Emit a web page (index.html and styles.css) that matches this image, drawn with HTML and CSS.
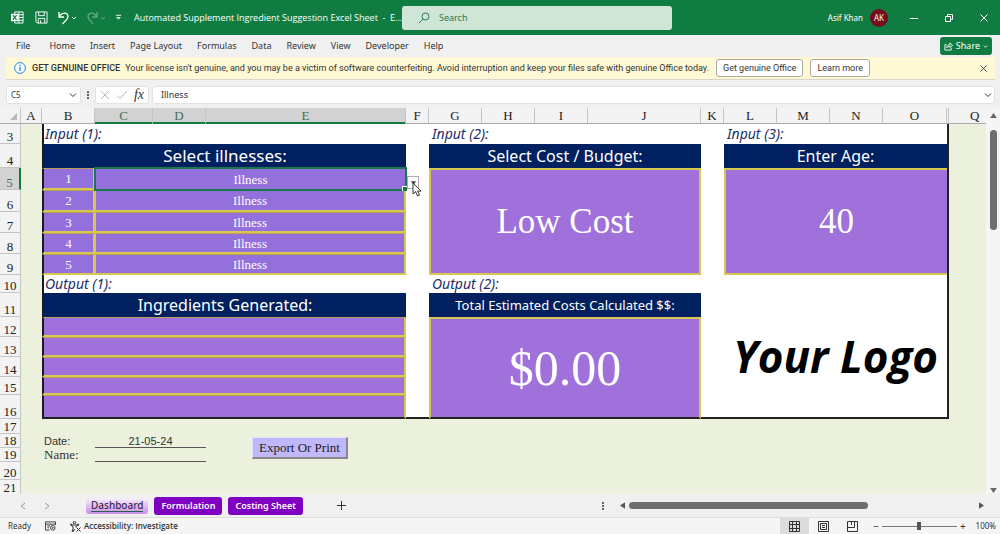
FILE: index.html
```html
<!DOCTYPE html>
<html lang="en">
<head>
<meta charset="utf-8">
<title>Automated Supplement Ingredient Suggestion Excel Sheet</title>
<link rel="stylesheet" href="styles.css">
</head>
<body>
<header class="titlebar">
  <div class="quick">
    <svg class="i-app" viewBox="0 0 14 14" width="13" height="13"><path d="M4 1h9v12H4z" fill="none" stroke="#fff"/><path d="M8.500 1v12M4 4h9M4 7h9M4 10h9" stroke="#fff" fill="none"/><path d="M0 3h8v8H0z" fill="#fff"/><path d="M2 4.500l4 5M6 4.500l-4 5" stroke="#107c41" stroke-width="1.300"/></svg>
    <button class="tool" aria-label="Save"><svg viewBox="0 0 14 14" width="13" height="13" class="ln"><path d="M1 1h12v12H2.500L1 11.500zM4 1v4h6V1M3.500 13V8h7v5M6 10v3"/></svg></button>
    <button class="tool" aria-label="Undo"><svg viewBox="0 0 20 14" width="20" height="14" class="ln"><path d="M2 1v5h5M2 6c3-5 9-5 9-.5C11 8 8 10 5.500 13" stroke-width="1.300"/><path d="M15 6l2 2 2-2"/></svg></button>
    <button class="tool dim" aria-label="Redo"><svg viewBox="0 0 20 14" width="20" height="14" class="ln"><path d="M11 1v5H6M11 6C8 1 2 1 2 5.500C2 8 5 10 7 13" stroke-width="1.300"/><path d="M15 6l2 2 2-2"/></svg></button>
    <button class="tool" aria-label="Customize toolbar"><svg viewBox="0 0 8 8" width="7" height="7" class="ln"><path d="M1 1.500h6M2 4l2 2 2-2z"/></svg></button>
  </div>
  <div class="doc">Automated Supplement Ingredient Suggestion Excel Sheet&nbsp; -&nbsp; E...</div>
  <label class="search"><svg viewBox="0 0 12 12" width="12" height="12"><circle cx="7.500" cy="4.500" r="3.500"/><path d="M5 7L1 11"/></svg><input type="text" placeholder="Search" aria-label="Search"></label>
  <div class="account"><span>Asif Khan</span><span class="avatar">AK</span></div>
  <div class="window">
    <button class="tool" aria-label="Minimize"><svg viewBox="0 0 8 8" width="8" height="8" class="ln"><path d="M0 4.500h8"/></svg></button>
    <button class="tool" aria-label="Restore"><svg viewBox="0 0 8 8" width="8" height="8" class="ln"><path d="M.5 2.500h5v5h-5zM2.500 2V.5h5v5H6"/></svg></button>
    <button class="tool" aria-label="Close"><svg viewBox="0 0 8 8" width="8" height="8" class="ln"><path d="M.5.5l7 7M7.500.5l-7 7"/></svg></button>
  </div>
</header>
<nav class="menu">
  <button class="file">File</button><button>Home</button><button>Insert</button><button>Page Layout</button><button>Formulas</button><button>Data</button><button>Review</button><button>View</button><button>Developer</button><button>Help</button>
  <button class="share"><svg viewBox="0 0 10 10" width="9" height="9" class="ln"><path d="M3 3H1v6h7V6.500M3 6.500C3.500 4 5 3 6.500 3V1L9.500 3.700 6.500 6.200V4.700C5 4.700 4 5.200 3 6.500z"/></svg>Share<svg viewBox="0 0 6 6" width="5" height="5" class="ln"><path d="M1 2l2 2 2-2"/></svg></button>
</nav>
<section class="notice">
  <svg viewBox="0 0 12 12" width="12" height="12"><circle cx="6" cy="6" r="5.400" fill="#f4fbff" stroke="#2b88d8"/><path d="M6 5v4M6 2.700v1.300" stroke="#2b88d8" stroke-width="1.300"/></svg>
  <strong>GET GENUINE OFFICE</strong>
  <span>Your license isn't genuine, and you may be a victim of software counterfeiting. Avoid interruption and keep your files safe with genuine Office today.</span>
  <button class="outline">Get genuine Office</button><button class="outline">Learn more</button>
  <button class="tool close" aria-label="Dismiss"><svg viewBox="0 0 8 8" width="7" height="7" class="ln"><path d="M.5.5l7 7M7.500.5l-7 7"/></svg></button>
</section>
<section class="formula">
  <label class="box name"><input type="text" value="C5" aria-label="Name box"><svg viewBox="0 0 8 8" width="8" height="8" class="ln"><path d="M1 2.500l3 3 3-3"/></svg></label>
  <span class="grip"></span>
  <div class="box fx">
    <button class="tool faint" aria-label="Cancel"><svg viewBox="0 0 10 10" width="10" height="10" class="ln"><path d="M1 1l8 8M9 1L1 9"/></svg></button>
    <button class="tool faint" aria-label="Enter"><svg viewBox="0 0 12 10" width="12" height="10" class="ln"><path d="M1 5.500l3 3L11 1"/></svg></button>
    <button class="tool fn" aria-label="Insert function">fx</button>
  </div>
  <label class="box entry"><input type="text" value="Illness" aria-label="Formula bar"><svg viewBox="0 0 8 8" width="8" height="8" class="ln"><path d="M1 2.500l3 3 3-3"/></svg></label>
</section>
<main class="work">
  <div class="grid">
    <table class="sheet">
      <colgroup><col class="w21"><col class="w21"><col class="w53"><col class="w58"><col class="w53"><col class="w200"><col class="w23"><col class="w53"><col class="w53"><col class="w53"><col class="w113"><col class="w23"><col class="w53"><col class="w53"><col class="w53"><col class="w64"><col class="w2"><col></colgroup>
      <thead><tr><th class="corner"><svg viewBox="0 0 8 8" width="7" height="7"><path d="M8 0v8H0z" fill="#b8b8b8"/></svg></th><th>A</th><th>B</th><th class="on">C</th><th class="on">D</th><th class="on">E</th><th>F</th><th>G</th><th>H</th><th>I</th><th>J</th><th>K</th><th>L</th><th>M</th><th>N</th><th>O</th><th></th><th class="last">Q</th></tr></thead>
      <tbody>
        <tr class="h20"><th>3</th><td rowspan="14"></td><td colspan="4" class="label edge">Input (1):</td><td class="white"></td><td colspan="4" class="label">Input (2):</td><td class="white foot" rowspan="14"></td><td colspan="4" class="label">Input (3):</td><td class="frame" rowspan="14"></td><td rowspan="14"></td></tr>
        <tr class="h24"><th>4</th><td colspan="4" class="head large edge">Select illnesses:</td><td class="white"></td><td colspan="4" class="head">Select Cost / Budget:</td><td colspan="4" class="head">Enter Age:</td></tr>
        <tr class="h22"><th class="on">5</th><td class="item edge">1</td><td colspan="3" class="item selected">Illness<span class="handle"></span></td><td class="white anchor"><button class="drop" aria-label="Choose illness"><svg viewBox="0 0 6 4" width="5" height="4"><path d="M0 0h6L3 4z" fill="#333"/></svg></button><svg class="pointer" viewBox="0 0 10 15" width="10" height="15"><path d="M1 1v11l2.600-2.300L5.500 14l2-.9-1.900-4H9z" fill="#fff" stroke="#333"/></svg></td><td colspan="4" rowspan="5" class="value">Low Cost</td><td colspan="4" rowspan="5" class="value open">40</td></tr>
        <tr class="h22"><th>6</th><td class="item edge">2</td><td colspan="3" class="item">Illness</td><td class="white"></td></tr>
        <tr class="h21"><th>7</th><td class="item edge">3</td><td colspan="3" class="item">Illness</td><td class="white"></td></tr>
        <tr class="h21"><th>8</th><td class="item edge">4</td><td colspan="3" class="item">Illness</td><td class="white"></td></tr>
        <tr class="h21"><th>9</th><td class="item edge">5</td><td colspan="3" class="item">Illness</td><td class="white"></td></tr>
        <tr class="h18"><th>10</th><td colspan="4" class="label edge">Output (1):</td><td class="white foot" rowspan="7"></td><td colspan="4" class="label">Output (2):</td><td colspan="4" rowspan="7" class="logo foot">Your Logo</td></tr>
        <tr class="h24"><th>11</th><td colspan="4" class="head edge">Ingredients Generated:</td><td colspan="4" class="head small">Total Estimated Costs Calculated $$:</td></tr>
        <tr class="h20"><th>12</th><td colspan="4" class="item result edge"></td><td colspan="4" rowspan="5" class="value total foot">$0.00</td></tr>
        <tr class="h20"><th>13</th><td colspan="4" class="item result edge"></td></tr>
        <tr class="h20"><th>14</th><td colspan="4" class="item result edge"></td></tr>
        <tr class="h18"><th>15</th><td colspan="4" class="item result edge"></td></tr>
        <tr class="h24"><th>16</th><td colspan="4" class="item result edge foot"></td></tr>
        <tr class="h15"><th>17</th><td colspan="17"></td></tr>
        <tr class="h14"><th>18</th><td></td><td class="sign">Date:</td><td colspan="2" class="line">21-05-24</td><td rowspan="2" class="action"><button class="export">Export Or Print</button></td><td colspan="12" rowspan="2"></td></tr>
        <tr class="h14"><th>19</th><td></td><td class="sign serif">Name:</td><td colspan="2" class="line"></td></tr>
        <tr class="h18"><th>20</th><td colspan="17"></td></tr>
        <tr class="h15"><th>21</th><td colspan="17"></td></tr>
      </tbody>
    </table>
  </div>
  <div class="vscroll"><svg viewBox="0 0 8 6" width="7" height="5"><path d="M4 0l4 6H0z"/></svg><span class="thumb"></span><svg class="end" viewBox="0 0 8 6" width="7" height="5"><path d="M0 0h8L4 6z"/></svg></div>
</main>
<section class="tabs">
  <div class="arrows"><svg viewBox="0 0 6 8" width="6" height="8" class="ln"><path d="M5 1L1 4l4 3"/></svg><svg viewBox="0 0 6 8" width="6" height="8" class="ln"><path d="M1 1l4 3-4 3"/></svg></div>
  <button class="tab current"><span>Dashboard</span></button><button class="tab">Formulation</button><button class="tab">Costing Sheet</button>
  <button class="tool add" aria-label="New sheet"><svg viewBox="0 0 9 9" width="9" height="9" class="ln"><path d="M4.500 0v9M0 4.500h9"/></svg></button>
  <span class="grip"></span>
  <div class="hscroll"><svg viewBox="0 0 6 8" width="5" height="7"><path d="M6 0v8L0 4z"/></svg><div class="track"><span class="thumb"></span></div><svg viewBox="0 0 6 8" width="5" height="7"><path d="M0 0v8l6-4z"/></svg></div>
</section>
<footer class="status">
  <span>Ready</span>
  <svg viewBox="0 0 12 10" width="11" height="10" class="ln"><path d="M5 9.500H.5v-9h11V4M.5 3h11M2.500 5h3M2.500 7h2"/><circle cx="8.500" cy="7" r="2.500"/><circle cx="8.500" cy="7" r=".6"/></svg>
  <span class="access"><svg viewBox="0 0 11 11" width="11" height="11" class="ln"><circle cx="4.500" cy="1.700" r="1.200"/><path d="M.5 3c3 1.500 5 1.500 8 0l.3 1.200L6 5.300v1M.5 3l.3 1.200L3 5.300V8L2 10.500l1.200.2L4.500 8M6.500 6.500l4 4M10.500 6.500l-4 4"/></svg><strong>Accessibility: Investigate</strong></span>
  <div class="views">
    <button class="tool active" aria-label="Normal view"><svg viewBox="0 0 11 11" width="11" height="11" class="ln"><path d="M.5.5h10v10H.5zM3.500.5v10M7.500.5v10M.5 3.500h10M.5 7.500h10"/></svg></button>
    <button class="tool" aria-label="Page layout view"><svg viewBox="0 0 11 11" width="11" height="11" class="ln"><path d="M.5.5h10v10H.5zM2.500 2.500h6v6h-6zM4 4.500h3M4 6.500h3"/></svg></button>
    <button class="tool" aria-label="Page break view"><svg viewBox="0 0 11 11" width="11" height="11" class="ln"><path d="M.5.5h10v10H.5zM.5 6.500h7V.5M4.500.5V4"/></svg></button>
  </div>
  <div class="zoom"><button class="tool" aria-label="Zoom out">−</button><input type="range" min="0" max="200" value="100" aria-label="Zoom"><button class="tool" aria-label="Zoom in">+</button></div>
  <span class="percent">100%</span>
</footer>
</body>
</html>
```
FILE: styles.css
```css
* { box-sizing: border-box; }
body { margin: 0; height: 100vh; display: flex; flex-direction: column; overflow: hidden; background: #f0f0f0; color: #333; font: 10px/14px "Noto Sans", "Open Sans", sans-serif; }
button, input { font: inherit; color: inherit; margin: 0; padding: 0; border: 0; background: none; min-width: 0; }
.tool { display: flex; align-items: center; justify-content: center; }
svg { display: block; flex: none; }
.ln { fill: none; stroke: currentColor; stroke-width: 1; }

.titlebar { display: flex; align-items: center; height: 35px; flex: none; background: #107c41; color: #fff; font-size: 9px; padding-right: 12px; }
.quick { display: flex; align-items: center; width: 134px; padding-left: 11px; gap: 9px; flex: none; }
.quick .i-app { margin-right: 2px; }
.dim { opacity: .35; }
.doc { width: 268px; flex: none; white-space: nowrap; font-family: "Open Sans", sans-serif; }
.search { display: flex; align-items: center; gap: 9px; flex: 0 1 270px; height: 24px; padding-left: 16px; border-radius: 3px; background: #cfe5d6; color: #2c7a50; font-size: 9px; }
.search svg { fill: none; stroke: #2c7a50; }
.search input { flex: 1; }
.search input::placeholder { color: #2c7a50; opacity: 1; }
.account { display: flex; align-items: center; gap: 7px; margin-left: auto; font-size: 8px; }
.avatar { width: 18px; height: 18px; border-radius: 50%; background: #750b1c; line-height: 18px; text-align: center; font-size: 8px; }
.window { display: flex; gap: 27px; margin-left: 22px; }

.menu { display: flex; align-items: center; height: 22px; flex: none; gap: 15px; padding: 0 8px 0 16px; font-size: 9px; }
.menu .file { margin-right: 4px; }
.menu .share { display: flex; align-items: center; gap: 3px; margin-left: auto; height: 18px; padding: 0 4px; border-radius: 3px; background: #107c41; color: #fff; }
.notice { display: flex; align-items: center; height: 23px; flex: none; margin: 0 5px 0 6px; padding: 0 8px; background: #fff8d4; font: 9px/14px Roboto, sans-serif; border-bottom: 1px solid #d8d6cc; white-space: nowrap; }
.notice strong { font-weight: 500; margin: 0 5px 0 6px; }
.outline { height: 18px; padding: 0 6px; margin-left: 7px; border: 1px solid #aaa; border-radius: 3px; background: #fff; }
.notice .close { margin-left: auto; }

.formula { display: flex; align-items: center; height: 28px; flex: none; padding: 1px 5px 0 6px; }
.box { display: flex; align-items: center; height: 18px; background: #fff; border: 1px solid #e2e2e2; border-radius: 3px; }
.name { width: 75px; padding: 0 3px 0 4px; font-size: 8px; }
.name input, .entry input { flex: 1; }
.entry { font-size: 9px; }
.grip { width: 2px; height: 8px; margin: 0 6px; flex: none; background: repeating-linear-gradient(#666 0 2px, transparent 2px 3px); }
.fx { width: 54px; justify-content: space-between; padding: 0 4px; }
.faint { color: #bbb; }
.fn { font: italic 14px/14px "Liberation Serif", serif; }
.entry { flex: 1; margin-left: 3px; padding: 0 2px 0 8px; }

.work { display: flex; flex: 1; min-height: 0; }
.grid { flex: 1; min-width: 0; overflow: hidden; background: #ebf1dd; }
.sheet { width: 100%; table-layout: fixed; border-collapse: separate; border-spacing: 0; line-height: 12px; }
.sheet td, .sheet th { padding: 0; overflow: hidden; white-space: nowrap; }
.sheet th { background: #f3f3f3; font: 13px/12px "Liberation Serif", serif; border-right: 1px solid #c4c4c4; border-bottom: 1px solid #c4c4c4; vertical-align: bottom; color: #222; }
.sheet thead th { height: 16px; line-height: 14px; border-bottom-color: #aaa; }
.sheet th.on { background: #d2d2d2; color: #447055; border-bottom-color: #107c41; box-shadow: inset 0 -1px #107c41; }
.sheet tbody th.on { border-bottom-color: #c4c4c4; border-right: 2px solid #107c41; box-shadow: none; }
.sheet .corner svg { margin: 0 3px 3px auto; }
.sheet .last { text-align: left; padding-left: 21px; border-right: 0; }
.w2 { width: 2px; } .w21 { width: 21px; } .w23 { width: 23px; } .w53 { width: 53px; } .w58 { width: 58px; } .w64 { width: 64px; } .w113 { width: 113px; } .w200 { width: 200px; }
.h14 { height: 14px; } .h15 { height: 15px; } .h18 { height: 18px; } .h20 { height: 20px; } .h21 { height: 21px; } .h22 { height: 22px; } .h24 { height: 24px; }
.white, .sheet .label, .logo { background: #fff; }
.sheet .label { padding-left: 3px; color: #1d2d66; font: italic 14px/16px "Noto Sans", sans-serif; }
.sheet .label.edge { padding-left: 1px; }
.head { background: #002060; color: #fff; text-align: center; font-size: 16px; line-height: 20px; }
.head.large { font-size: 17px; }
.head.small { font-size: 13px; }
.item { background: #9370db; color: #fff; text-align: center; border: solid #d9c850; border-width: 1px 2px 2px 1px; border-top-color: #b9a052; font: 13px/13px "Liberation Serif", serif; }
.result, .value { background: #a070db; }
.value { border: 2px solid #d9c850; color: #fff; text-align: center; font: 35px/40px "Liberation Serif", serif; }
.value.open { border-right: 0; }
.value.total { font-size: 50px; line-height: 54px; }
.edge { border-left: 2px solid #1a1a22; }
.foot { border-bottom: 2px solid #222; }
.frame { background: #222; }
.sheet .selected { position: relative; z-index: 1; overflow: visible; border: 1px solid #d9c850; outline: 2px solid #18794a; outline-offset: -1px; }
.handle { position: absolute; right: -2px; bottom: -2px; width: 5px; height: 5px; background: #107c41; border: solid #fff; border-width: 1px 0 0 1px; }
.sheet .anchor { position: relative; overflow: visible; }
.drop { position: absolute; left: 1px; top: 8px; width: 12px; height: 13px; display: flex; align-items: center; justify-content: center; background: #fff; border: 1px solid #b8a9b8; }
.pointer { position: absolute; left: 6px; top: 14px; z-index: 2; }
.sheet .logo { padding-top: 20px; text-align: center; vertical-align: middle; color: #000; font: italic bold 44px/54px "Open Sans", sans-serif; }
.sheet .sign { padding-left: 2px; font: 11px/12px "Liberation Sans", sans-serif; }
.sheet .sign.serif { font: 13px/12px "Liberation Serif", serif; }
.line { border-bottom: 1px solid #555; text-align: center; font: 11px/12px "Liberation Sans", sans-serif; }
.sheet .action { padding-left: 46px; }
.export { display: block; height: 22px; padding: 0 6px; background: #c0b8fa; border: 1px solid #e4e0ff; border-right: 2px solid #888; border-bottom: 2px solid #888; color: #222; font: 13px/18px "Liberation Serif", serif; }

.vscroll { width: 14px; flex: none; display: flex; flex-direction: column; align-items: center; padding: 5px 0 1px; background: #f5f5f5; fill: #666; }
.vscroll .thumb { width: 7px; height: 100px; margin-top: 12px; border-radius: 4px; background: #6e6e6e; }
.vscroll .end { margin-top: auto; }
.tabs { display: flex; align-items: center; height: 24px; flex: none; border-bottom: 1px solid #ddd; padding-right: 16px; }
.arrows { display: flex; gap: 18px; width: 86px; padding-left: 20px; color: #999; }
.tab { height: 18px; padding: 0 7px; margin-right: 6px; border-radius: 3px; background: #7f00c0; color: #fff; font-size: 9px; font-weight: 600; }
.tab.current { height: 16px; padding: 0 5px; background: linear-gradient(#f7effb, #c98fe6); color: #3f2850; font-size: 10px; font-weight: 500; line-height: 12px; }
.tab.current span { display: block; border-bottom: 1px solid #286050; }
.add { margin-left: 28px; }
.tabs .grip { margin: 0 16px 0 auto; }
.hscroll { display: flex; align-items: center; width: 37%; fill: #555; }
.track { flex: 1; margin: 0 4px; }
.track .thumb { display: block; width: 69%; height: 7px; border-radius: 4px; background: #6e6e6e; }
.status { display: flex; align-items: center; height: 16px; flex: none; padding: 0 4px 0 8px; gap: 14px; background: #f5f5f5; font-size: 8px; }
.access { display: flex; gap: 3px; align-items: center; font-size: 8px; }
.access strong { font-weight: 600; font-family: "Open Sans", sans-serif; }
.views { display: flex; margin-left: auto; height: 100%; }
.views .tool { width: 29px; }
.views .active { background: #dcdcdc; }
.zoom { display: flex; align-items: center; gap: 3px; margin-left: -8px; font-size: 10px; }
.zoom input { appearance: none; width: 75px; height: 10px; background: linear-gradient(#777, #777) center / 100% 1px no-repeat; }
.zoom input::-webkit-slider-thumb { appearance: none; width: 4px; height: 8px; background: #555; }
.percent { margin-left: -4px; }
```
